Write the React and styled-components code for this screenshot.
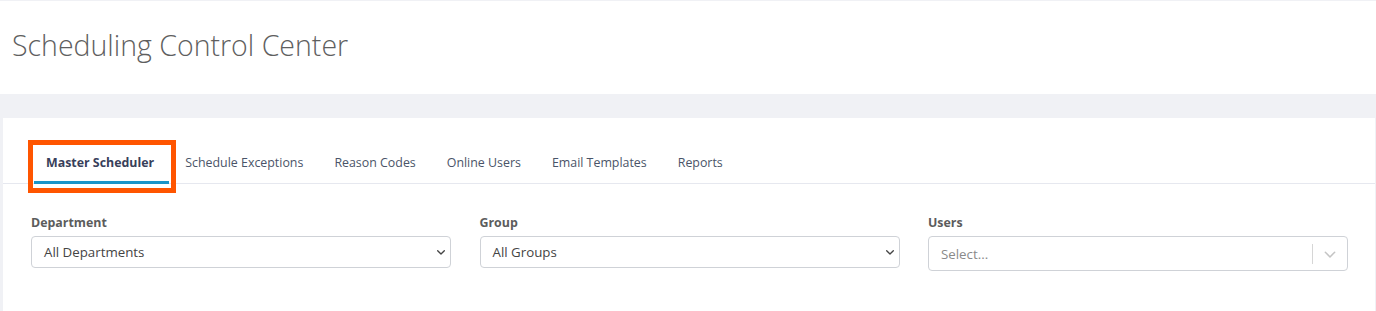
import React from 'react';
import styled, { createGlobalStyle } from 'styled-components';

const GlobalStyle = createGlobalStyle`
  body {
    margin: 0;
    background: #f0f1f5;
    font-family: "Open Sans", "Liberation Sans", sans-serif;
  }
`;

const Page = styled.div`
  width: 1376px;
  height: 311px;
  overflow: hidden;
  background: #f0f1f5;
  padding-top: 1px;
  box-sizing: border-box;
`;

const Header = styled.div`
  background: #fff;
  height: 93px;
  box-sizing: border-box;
  padding: 24px 0 0 12px;
`;

const Title = styled.h1`
  margin: 0;
  font-size: 28.5px;
  line-height: 40px;
  font-weight: 300;
  color: #5f5f5f;
`;

const Card = styled.div`
  margin: 24px 1px 0 3px;
  background: #fff;
  height: 200px;
`;

const TabBar = styled.div`
  display: flex;
  padding: 22px 0 0 28px;
  border-bottom: 1px solid #e6e8ef;
`;

const Tab = styled.div`
  position: relative;
  padding: 2px 16px 0 15px;
  height: 43px;
  box-sizing: border-box;
  display: flex;
  align-items: center;
  font-size: 12.4px;
  font-weight: ${p => (p.$active ? 700 : 400)};
  color: ${p => (p.$active ? '#38405a' : '#4a5468')};
  &::after {
    content: '';
    position: absolute;
    left: 3px;
    right: 1px;
    bottom: -1px;
    height: 3px;
    background: ${p => (p.$active ? '#1a94c8' : 'transparent')};
  }
`;

const Highlight = styled.div`
  position: absolute;
  left: -3px;
  right: -6px;
  top: 0;
  bottom: -10px;
  border: 5px solid #ff5500;
  pointer-events: none;
`;

const Filters = styled.div`
  display: grid;
  grid-template-columns: 420px 420px 420px;
  column-gap: 28.5px;
  padding: 30px 0 0 28px;
`;

const Field = styled.div`
  display: flex;
  flex-direction: column;
`;

const Label = styled.label`
  font-size: 12.4px;
  font-weight: 700;
  color: #5c5c5c;
  margin-bottom: 4px;
  height: 18px;
  line-height: 18px;
`;

const SelectBox = styled.div`
  height: ${p => (p.$tall ? '35px' : '32px')};
  box-sizing: border-box;
  border: 1px solid #cfd2d7;
  border-radius: 4px;
  display: flex;
  align-items: center;
  padding: 0 ${p => (p.$tall ? '10px' : '4px')} 0 12px;
  font-size: 13.3px;
  color: ${p => (p.$placeholder ? '#8a8a8a' : '#444')};
  background: #fff;
`;

const Value = styled.span`
  flex: 1;
`;

const Separator = styled.span`
  width: 1px;
  height: 20px;
  background: #d6d6d6;
  margin: 0 10px 0 0;
`;

const Chevron = ({ light }) => (
  <svg
    width={light ? 14 : 10}
    height={light ? 14 : 10}
    viewBox="0 0 12 12"
    fill="none"
    stroke={light ? '#c4c4c4' : '#444'}
    strokeWidth={light ? 1.3 : 1.6}
    strokeLinecap="round"
    strokeLinejoin="round"
  >
    <path d="M2 4.5 L6 8.5 L10 4.5" />
  </svg>
);

const tabs = [
  'Master Scheduler',
  'Schedule Exceptions',
  'Reason Codes',
  'Online Users',
  'Email Templates',
  'Reports',
];

const App = () => {
  return (
    <Page>
      <GlobalStyle />
      <Header>
        <Title>Scheduling Control Center</Title>
      </Header>
      <Card>
        <TabBar>
          {tabs.map((t, i) => (
            <Tab key={t} $active={i === 0}>
              {t}
              {i === 0 && <Highlight />}
            </Tab>
          ))}
        </TabBar>
        <Filters>
          <Field>
            <Label>Department</Label>
            <SelectBox>
              <Value>All Departments</Value>
              <Chevron />
            </SelectBox>
          </Field>
          <Field>
            <Label>Group</Label>
            <SelectBox>
              <Value>All Groups</Value>
              <Chevron />
            </SelectBox>
          </Field>
          <Field>
            <Label>Users</Label>
            <SelectBox $placeholder $tall>
              <Value>Select...</Value>
              <Separator />
              <Chevron light />
            </SelectBox>
          </Field>
        </Filters>
      </Card>
    </Page>
  );
};

export default App;
